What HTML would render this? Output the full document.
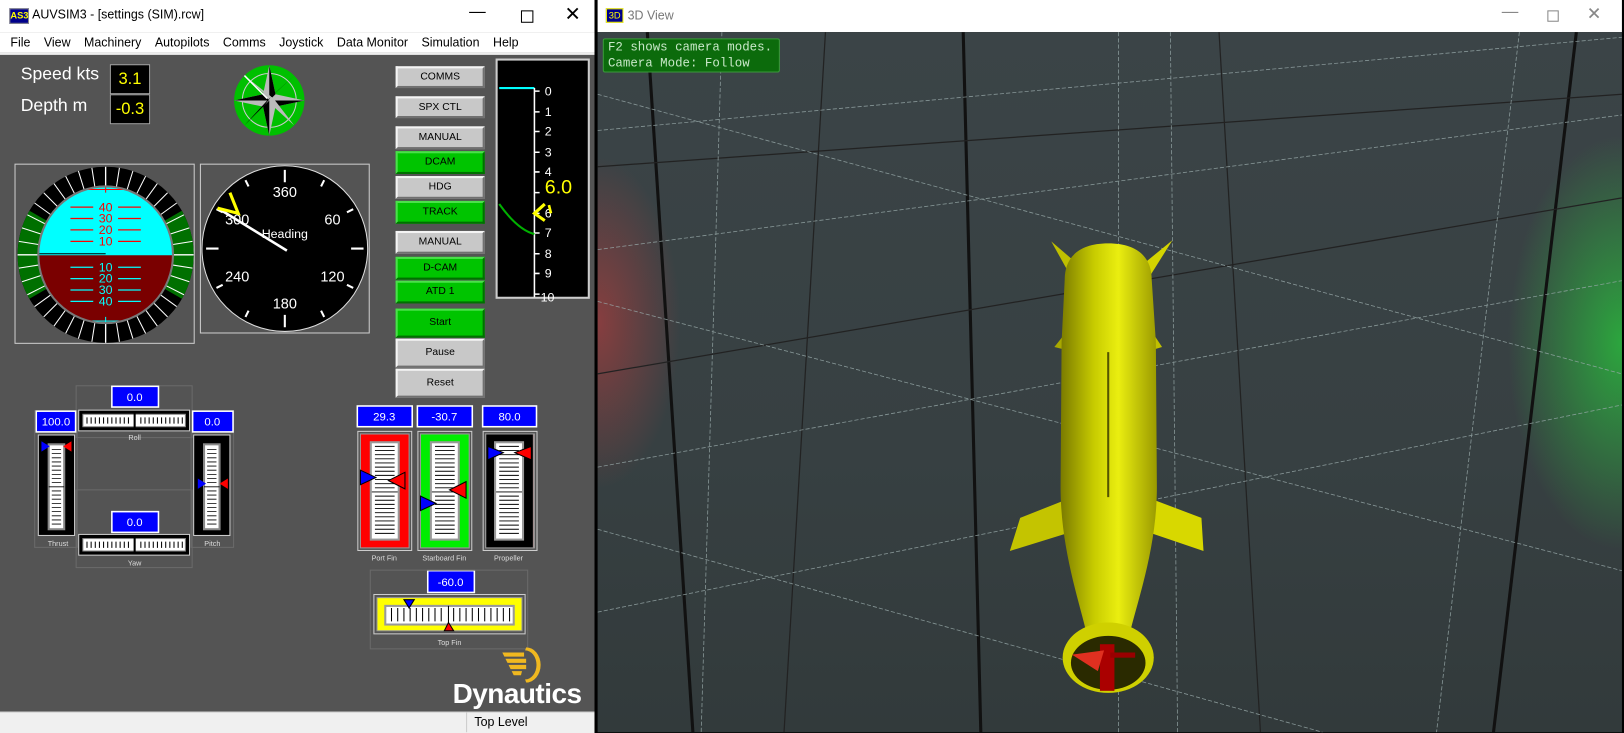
<!DOCTYPE html>
<html><head><meta charset="utf-8"><style>
html,body{margin:0;padding:0;width:1624px;height:732px;overflow:hidden;background:#000;font-family:"Liberation Sans",sans-serif}
#w{position:absolute;left:0;top:0;width:1568px;height:707px;transform:scale(1.03571);transform-origin:0 0}
.a{position:absolute}
.btn{position:absolute;left:382px;width:86px;font-size:10px;text-align:center;color:#000;box-sizing:border-box;border:2px solid;border-color:#f4f4f4 #707070 #707070 #f4f4f4;background:#c8c8c8}
.g{background:#00c400;border-color:#4be04b #007000 #007000 #4be04b}
.menu span{margin-right:13px}
</style></head><body><div id="w">
<div class="a" style="left:0;top:0;width:574px;height:707px;background:#545454"></div>
<div class="a" style="left:0;top:0;width:574px;height:31px;background:#fff"></div>
<div class="a" style="left:9px;top:8px;width:17px;height:13px;background:#00008b;color:#ff0;font-size:9px;font-weight:bold;line-height:13px;text-align:center;border:1px solid #888">AS3</div>
<div class="a" style="left:31px;top:7px;font-size:12px;color:#000">AUVSIM3 - [settings (SIM).rcw]</div>
<div class="a" style="left:453px;top:3px;font-size:16px;color:#000">&#8212;</div>
<div class="a" style="left:503px;top:10px;width:10px;height:10px;border:1px solid #000"></div>
<div class="a" style="left:545px;top:3px;font-size:19px;color:#000">&#10005;</div>
<div class="a menu" style="left:0;top:31px;width:574px;height:20px;background:#fff;font-size:12px;line-height:20px;padding-left:10px;box-sizing:border-box;color:#000">
<span>File</span><span>View</span><span>Machinery</span><span>Autopilots</span><span>Comms</span><span>Joystick</span><span>Data Monitor</span><span>Simulation</span><span>Help</span></div>
<div class="a" style="left:0;top:51px;width:574px;height:2px;background:#eee"></div>
<div class="a" style="left:20px;top:62px;color:#fff;font-size:17px">Speed kts</div>
<div class="a" style="left:20px;top:92px;color:#fff;font-size:17px">Depth m</div>
<div class="a" style="left:106px;top:62px;width:37px;height:27px;background:#000;border:1px solid #aaa;color:#ff0;font-size:16px;text-align:center;line-height:27px">3.1</div>
<div class="a" style="left:106px;top:91px;width:37px;height:27px;background:#000;border:1px solid #aaa;color:#ff0;font-size:16px;text-align:center;line-height:27px">-0.3</div>

<div class="btn" style="top:64px;height:21px;line-height:17px">COMMS</div>
<div class="btn" style="top:93px;height:21px;line-height:17px">SPX CTL</div>
<div class="btn" style="top:122px;height:22px;line-height:18px">MANUAL</div>
<div class="btn g" style="top:146px;height:22px;line-height:18px">DCAM</div>
<div class="btn" style="top:170px;height:22px;line-height:18px">HDG</div>
<div class="btn g" style="top:194px;height:22px;line-height:18px">TRACK</div>
<div class="btn" style="top:223px;height:22px;line-height:18px">MANUAL</div>
<div class="btn g" style="top:248px;height:22px;line-height:18px">D-CAM</div>
<div class="btn g" style="top:271px;height:22px;line-height:18px">ATD 1</div>
<div class="btn g" style="top:298px;height:28px;line-height:24px">Start</div>
<div class="btn" style="top:327px;height:28px;line-height:24px">Pause</div>
<div class="btn" style="top:356px;height:28px;line-height:24px">Reset</div>

<svg class="a" style="left:0;top:0" width="574" height="707" font-family="Liberation Sans,sans-serif">
<circle cx="260" cy="97" r="34" fill="#00c000"/>
<circle cx="260" cy="97" r="26" fill="none" stroke="#ccc" stroke-width="1"/>
<polygon points="260,63 266,91 294,97 266,103 260,131 254,103 226,97 254,91" fill="#bbb"/>
<polygon points="260,63 266,91 260,97" fill="#000"/><polygon points="294,97 266,103 260,97" fill="#000"/><polygon points="260,131 254,103 260,97" fill="#000"/><polygon points="226,97 254,91 260,97" fill="#000"/>
<polygon points="236,73 258,93 262,101 284,121 264,95" fill="#bbb"/>
<polygon points="284,73 262,93 256,101 236,121 258,97" fill="#000"/>
<line x1="236" y1="73" x2="258" y2="95" stroke="#fff" stroke-width="1.5"/>
<rect x="14.5" y="158.5" width="173" height="173" fill="none" stroke="#ccc"/>
<circle cx="102" cy="246" r="85" fill="#000"/>
<path d="M102 246 L28.4 203.5 A85 85 0 0 0 28.4 288.5Z" fill="#007000"/>
<path d="M102 246 L175.6 203.5 A85 85 0 0 1 175.6 288.5Z" fill="#007000"/>
<g stroke="#fff" stroke-width="1.3">
<line x1="102" y1="161" x2="102" y2="181"/><line x1="102" y1="311" x2="102" y2="331"/>
<line x1="17" y1="246" x2="37" y2="246"/><line x1="167" y1="246" x2="187" y2="246"/>
</g>
<g stroke="#fff" stroke-width="1">
<path d="M115.3 162.1L112.2 181.8M128.3 165.1L122.4 184.2M140.6 170.1L131.5 188M151.9 177.2L140.2 193.4M161.8 186.1L147.7 200.2M170.6 196L154.4 207.7M177.6 207.4L159.9 216.4M182.8 220L164.1 226.1M185.8 233.1L166.2 236.2M185.8 258.9L166.2 255.8M182.8 272L164.1 265.9M177.6 284.6L159.9 275.6M170.6 296L154.4 284.3M161.8 305.9L147.7 291.8M151.9 314.8L140.2 298.6M140.6 321.9L131.5 304M128.3 326.9L122.4 307.8M115.3 329.9L112.2 310.2"/>
<path d="M88.7 162.1L91.8 181.8M75.7 165.1L81.6 184.2M63.4 170.1L72.5 188M52.1 177.2L63.8 193.4M42.2 186.1L56.3 200.2M33.4 196L49.6 207.7M26.4 207.4L44.1 216.4M21.2 220L39.9 226.1M18.2 233.1L37.8 236.2M18.2 258.9L37.8 255.8M21.2 272L39.9 265.9M26.4 284.6L44.1 275.6M33.4 296L49.6 284.3M42.2 305.9L56.3 291.8M52.1 314.8L63.8 298.6M63.4 321.9L72.5 304M75.7 326.9L81.6 307.8M88.7 329.9L91.8 310.2"/>
</g>
<defs><clipPath id="ic"><ellipse cx="102" cy="246" rx="65" ry="66"/></clipPath></defs>
<g clip-path="url(#ic)">
<rect x="30" y="170" width="150" height="76" fill="#0ff"/>
<rect x="30" y="246" width="150" height="80" fill="#7a0000"/>
<line x1="37" y1="246" x2="167" y2="246" stroke="#0ff" stroke-width="1"/>
<line x1="37" y1="245" x2="102" y2="245" stroke="#000" stroke-width="1"/>
<line x1="70" y1="183" x2="134" y2="183" stroke="#f00"/><line x1="102" y1="180" x2="102" y2="186" stroke="#f00"/>
<line x1="70" y1="310" x2="134" y2="310" stroke="#0ff"/><line x1="102" y1="306" x2="102" y2="314" stroke="#0ff"/>
</g>
<ellipse cx="102" cy="246" rx="65" ry="66" fill="none" stroke="#777" stroke-width="2"/>
<g stroke="#f00" stroke-width="1.2"><path d="M68 200H90M114 200H136M68 211H90M114 211H136M68 222H90M114 222H136M68 233H90M114 233H136"/></g>
<g stroke="#0ff" stroke-width="1.2"><path d="M68 258H90M114 258H136M68 269H90M114 269H136M68 280H90M114 280H136M68 291H90M114 291H136"/></g>
<g font-size="12" text-anchor="middle" fill="#f00"><text x="102" y="204">40</text><text x="102" y="215">30</text><text x="102" y="226">20</text><text x="102" y="237">10</text></g>
<g font-size="12" text-anchor="middle" fill="#0ff"><text x="102" y="262">10</text><text x="102" y="273">20</text><text x="102" y="284">30</text><text x="102" y="295">40</text></g>
<rect x="193.5" y="158.5" width="163" height="163" fill="none" stroke="#ccc"/>
<circle cx="275" cy="240" r="80" fill="#000" stroke="#ddd" stroke-width="1"/>
<g stroke="#fff" stroke-width="2">
<path d="M275 164V176M275 304V316M199 240H211M339 240H351M313 174L310 180M237 174L240 180M341 202L335 205M209 202L215 205M341 278L335 275M209 278L215 275M313 306L310 300M237 306L240 300"/>
</g>
<g fill="#fff" font-size="14" text-anchor="middle">
<text x="275" y="190">360</text><text x="321" y="217">60</text><text x="321" y="272">120</text><text x="275" y="298">180</text><text x="229" y="272">240</text><text x="229" y="217">300</text>
<text x="275" y="230" font-size="12">Heading</text></g>
<line x1="212" y1="202" x2="277" y2="242" stroke="#fff" stroke-width="2.5"/>
<polyline points="222,186 230,206 210,201" fill="none" stroke="#ff0" stroke-width="3"/>
<rect x="479.5" y="57.5" width="89" height="230" fill="#000" stroke="#ccc" stroke-width="2"/>
<line x1="482" y1="85" x2="516" y2="85" stroke="#0ff" stroke-width="2"/>
<line x1="516" y1="85" x2="516" y2="287" stroke="#fff" stroke-width="1.5"/>
<g stroke="#fff" stroke-width="1.5"><path d="M516 88h5M516 108h5M516 127h5M516 147h5M516 166h5M516 186h5M516 206h5M516 225h5M516 245h5M516 264h5M516 284h5"/></g>
<g fill="#fff" font-size="12"><text x="526" y="92">0</text><text x="526" y="112">1</text><text x="526" y="131">2</text><text x="526" y="151">3</text><text x="526" y="170">4</text><text x="526" y="210">6</text><text x="526" y="229">7</text><text x="526" y="249">8</text><text x="526" y="268">9</text><text x="522" y="291">10</text></g>
<text x="526" y="187" fill="#ff0" font-size="19">6.0</text>
<path d="M482 197 Q500 222 516 226" fill="none" stroke="#00b000" stroke-width="2"/>
<polyline points="526,197 516,206 526,213" fill="none" stroke="#ff0" stroke-width="3"/>
<line x1="530" y1="198" x2="532" y2="206" stroke="#ff0" stroke-width="2.5"/>
<g fill="none" stroke="#6a6a6a"><rect x="73.5" y="372.5" width="112" height="50"/><rect x="73.5" y="473" width="112" height="75"/><rect x="33.5" y="396.5" width="41" height="132"/><rect x="184.5" y="396.5" width="41" height="132"/></g>
<g font-size="7" fill="#ddd" text-anchor="middle"><text x="130" y="425">Roll</text><text x="56" y="527">Thrust</text><text x="205" y="527">Pitch</text><text x="130" y="546">Yaw</text>
<text x="371" y="541">Port Fin</text><text x="429" y="541">Starboard Fin</text><text x="491" y="541">Propeller</text><text x="434" y="623">Top Fin</text></g>
<g fill="#0000ff" stroke="#fff" stroke-width="1.5"><rect x="108" y="373" width="45" height="20"/><rect x="35" y="397" width="38" height="20"/><rect x="186" y="397" width="39" height="20"/><rect x="108" y="494" width="45" height="20"/>
<rect x="345" y="392" width="53" height="20"/><rect x="403" y="392" width="53" height="20"/><rect x="466" y="392" width="52" height="20"/><rect x="413" y="551" width="45" height="21"/></g>
<g fill="#fff" font-size="11" text-anchor="middle"><text x="130" y="387">0.0</text><text x="54" y="411">100.0</text><text x="205" y="411">0.0</text><text x="130" y="508">0.0</text>
<text x="371" y="406">29.3</text><text x="429" y="406">-30.7</text><text x="492" y="406">80.0</text><text x="435" y="566">-60.0</text></g>
<g id="hs"><rect x="76" y="396" width="107" height="20" fill="#000" stroke="#ccc"/><rect x="80" y="400" width="99" height="12" fill="#fff" stroke="#888"/>
<path d="M84 403v6M88 403v6M92 403v6M96 403v6M100 403v6M104 403v6M108 403v6M112 403v6M116 403v6M120 403v6M124 403v6M136 403v6M140 403v6M144 403v6M148 403v6M152 403v6M156 403v6M160 403v6M164 403v6M168 403v6M172 403v6M176 403v6" stroke="#000"/>
<line x1="130" y1="398" x2="130" y2="414" stroke="#000" stroke-width="2"/></g>
<use href="#hs" y="120"/>
<g id="vs"><rect x="37" y="420" width="35" height="97" fill="#000" stroke="#ccc"/><rect x="47" y="429" width="15" height="82" fill="#fff" stroke="#888" stroke-width="2"/>
<path d="M50 434h9M50 438h9M50 442h9M50 446h9M50 450h9M50 454h9M50 458h9M50 462h9M50 466h9M50 474h9M50 478h9M50 482h9M50 486h9M50 490h9M50 494h9M50 498h9M50 502h9M50 506h9M47 470h15" stroke="#000" stroke-width="0.8"/></g>
<use href="#vs" x="150"/>
<polygon points="40,426 48,431 40,436" fill="#00f"/><polygon points="69,426 61,431 69,436" fill="#f00"/>
<polygon points="191,462 199,467 191,472" fill="#00f"/><polygon points="220,462 212,467 220,472" fill="#f00"/>
<g id="fg"><rect x="345.5" y="416.5" width="52" height="115" fill="none" stroke="#ccc"/><rect x="348" y="419" width="47" height="110" fill="#f00" stroke="#999"/>
<rect x="358" y="427" width="27" height="94" fill="#fff" stroke="#999" stroke-width="2"/>
<path d="M362 431h19M362 435h19M362 439h19M362 443h19M362 447h19M362 451h19M362 455h19M362 459h19M362 463h19M362 467h19M362 471h19M362 479h19M362 483h19M362 487h19M362 491h19M362 495h19M362 499h19M362 503h19M362 507h19M362 511h19M362 515h19M359 475h25" stroke="#000" stroke-width="0.9"/></g>
<use href="#fg" x="58"/><use href="#fg" x="121"/>
<rect x="406" y="419" width="47" height="110" fill="#00ee00" stroke="#999"/>
<rect x="416" y="427" width="27" height="94" fill="#fff" stroke="#999" stroke-width="2"/>
<path d="M420 431h19M420 435h19M420 439h19M420 443h19M420 447h19M420 451h19M420 455h19M420 459h19M420 463h19M420 467h19M420 471h19M420 479h19M420 483h19M420 487h19M420 491h19M420 495h19M420 499h19M420 503h19M420 507h19M420 511h19M420 515h19M417 475h25" stroke="#000" stroke-width="0.9"/>
<rect x="469" y="419" width="46" height="110" fill="#000" stroke="#999"/>
<rect x="478" y="427" width="27" height="94" fill="#fff" stroke="#999" stroke-width="2"/>
<path d="M482 431h19M482 435h19M482 439h19M482 443h19M482 447h19M482 451h19M482 455h19M482 459h19M482 463h19M482 467h19M482 471h19M482 479h19M482 483h19M482 487h19M482 491h19M482 495h19M482 499h19M482 503h19M482 507h19M482 511h19M482 515h19M479 475h25" stroke="#000" stroke-width="0.9"/>
<g stroke="#000" stroke-width="1"><polygon points="348,454 363,461 348,468" fill="#00f"/><polygon points="391,456 375,464 391,472" fill="#f00"/>
<polygon points="406,479 421,486 406,493" fill="#00f"/><polygon points="450,465 434,473 450,481" fill="#f00"/>
<polygon points="471,431 486,437 471,444" fill="#00f"/><polygon points="513,431 497,437 513,444" fill="#f00"/></g>
<rect x="357.5" y="550.5" width="152" height="76" fill="none" stroke="#6a6a6a"/>
<rect x="361" y="574" width="146" height="38" fill="none" stroke="#ccc"/>
<rect x="364" y="577" width="140" height="32" fill="#ff0" stroke="#999"/>
<rect x="372" y="585" width="124" height="18" fill="#fff" stroke="#999" stroke-width="2"/>
<path d="M378 587v13M384 587v13M390 587v13M396 587v13M402 587v13M408 587v13M414 587v13M420 587v13M426 587v13M438 587v13M444 587v13M450 587v13M456 587v13M462 587v13M468 587v13M474 587v13M480 587v13M486 587v13M492 587v13M433 585v18" stroke="#000" stroke-width="1"/>
<polygon points="390,579 400,579 395,587" fill="#00f" stroke="#000"/><polygon points="429,609 438,609 433,601" fill="#f00" stroke="#000"/>
<g fill="#f0b820"><path d="M508 625a14 17 0 0 1 0 34l-1 -3a11 14 0 0 0 0 -28z"/>
<polygon points="485,630 506,630 506,634 487,634"/><polygon points="488,636 508,636 508,640 490,640"/><polygon points="491,642 508,642 508,646 493,646"/><polygon points="494,648 504,648 503,652 496,652"/></g>
<text x="437" y="679" font-size="27" font-weight="bold" fill="#fff" letter-spacing="-0.5">Dynautics</text>
</svg>
<div class="a" style="left:0;top:687px;width:574px;height:20px;background:#f0f0f0;border-top:1px solid #ccc"></div>
<div class="a" style="left:450px;top:687px;width:1px;height:20px;background:#ccc"></div>
<div class="a" style="left:458px;top:690px;font-size:12px;color:#000">Top Level</div>

<div class="a" style="left:577px;top:0;width:989px;height:31px;background:#fff"></div>
<div class="a" style="left:585px;top:8px;width:15px;height:12px;background:#00008b;color:#ff0;font-size:9px;line-height:12px;text-align:center;border:1px solid #ff0">3D</div>
<div class="a" style="left:606px;top:8px;font-size:12px;color:#777">3D View</div>
<div class="a" style="left:1450px;top:3px;font-size:16px;color:#888">&#8212;</div>
<div class="a" style="left:1494px;top:10px;width:9px;height:9px;border:1px solid #888"></div>
<div class="a" style="left:1532px;top:4px;font-size:17px;color:#888">&#10005;</div>
<div class="a" style="left:577px;top:31px;width:989px;height:676px;background:
radial-gradient(ellipse 80px 160px at 0px 280px,rgba(200,60,60,.55),rgba(200,60,60,0)),
radial-gradient(ellipse 110px 200px at 989px 300px,rgba(40,200,60,.75),rgba(40,200,60,0)),
linear-gradient(180deg,#3b4447,#374042 60%,#323a3b)"></div>
<svg class="a" style="left:577px;top:31px" width="989" height="676">
<g stroke="#111" stroke-width="3" fill="none"><line x1="48" y1="0" x2="92" y2="676"/><line x1="353" y1="0" x2="370" y2="676"/><line x1="945" y1="0" x2="865" y2="676"/></g>
<g stroke="#222" stroke-width="1.2" fill="none"><line x1="0" y1="130" x2="989" y2="60"/><line x1="0" y1="330" x2="989" y2="160"/><line x1="220" y1="0" x2="180" y2="676"/><line x1="600" y1="0" x2="640" y2="676"/></g>
<g stroke="#9aa" stroke-width="0.8" stroke-dasharray="4 2" fill="none" opacity=".8">
<line x1="503" y1="0" x2="503" y2="676"/><line x1="553" y1="0" x2="560" y2="676"/><line x1="890" y1="0" x2="810" y2="676"/>
<line x1="0" y1="95" x2="989" y2="5"/><line x1="0" y1="210" x2="989" y2="80"/><line x1="0" y1="420" x2="989" y2="240"/><line x1="0" y1="560" x2="989" y2="360"/>
<line x1="0" y1="60" x2="989" y2="330"/><line x1="0" y1="260" x2="989" y2="520"/><line x1="0" y1="480" x2="700" y2="676"/><line x1="120" y1="0" x2="100" y2="676"/>
</g>
<g transform="translate(-577,-31)">
<polygon points="1015,233 1044,258 1040,278" fill="#bfbf00"/><polygon points="1132,232 1100,258 1103,278" fill="#d4d400"/>
<polygon points="1018,335 1030,320 1030,338" fill="#a8a800"/><polygon points="1122,335 1112,320 1112,338" fill="#c0c000"/>
<polygon points="975,532 985,500 1028,483 1030,515" fill="#c4c400"/><polygon points="1162,532 1160,500 1115,483 1112,515" fill="#d8d800"/>
<defs><linearGradient id="sb" x1="0" x2="1"><stop offset="0" stop-color="#7a7a00"/><stop offset=".35" stop-color="#c8cc00"/><stop offset=".6" stop-color="#eaee10"/><stop offset="1" stop-color="#9a9a00"/></linearGradient></defs>
<path d="M1070 235 C1100 235 1112 250 1112 270 L1116 330 L1117 470 C1117 530 1098 580 1090 615 L1050 615 C1042 580 1024 530 1024 470 L1025 330 L1028 270 C1028 250 1040 235 1070 235Z" fill="url(#sb)"/>
<ellipse cx="1070" cy="635" rx="44" ry="34" fill="#cfd000"/>
<ellipse cx="1070" cy="640" rx="36" ry="26" fill="#2a2a00"/>
<rect x="1062" y="622" width="14" height="45" fill="#a00"/><polygon points="1035,632 1066,628 1060,648" fill="#e03020"/><rect x="1072" y="630" width="24" height="5" fill="#900"/>
<line x1="1070" y1="340" x2="1070" y2="480" stroke="#555500" stroke-width="2"/>
</g>
</svg>
<div class="a" style="left:582px;top:37px;width:171px;height:33px;background:#0c6b0c;border:1px solid #3a9a3a;border-radius:2px;color:#c8e8c8;font-family:'Liberation Mono',monospace;font-size:12px;line-height:15px;padding:1px 4px;box-sizing:border-box;white-space:pre">F2 shows camera modes.
Camera Mode: Follow</div>
</div></body></html>
